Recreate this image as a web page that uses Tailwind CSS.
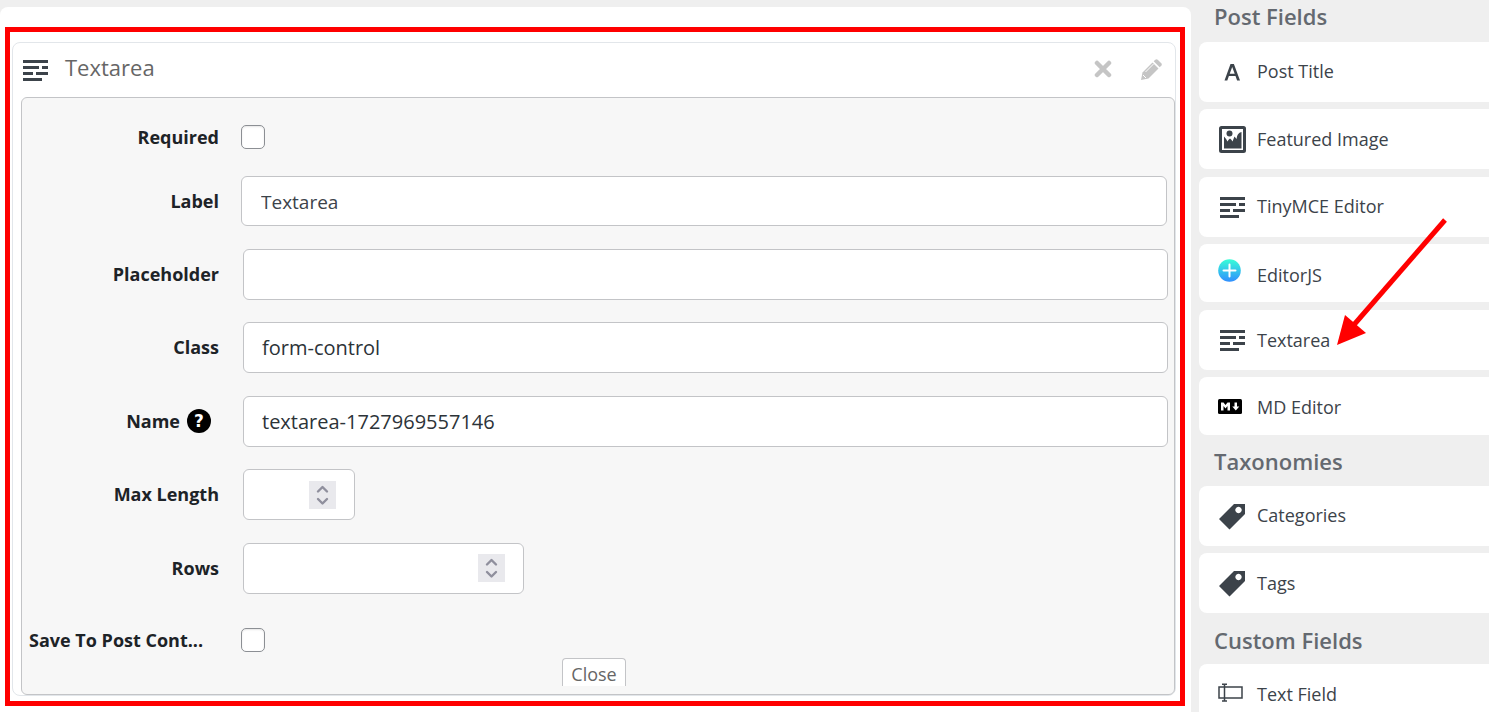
<!DOCTYPE html>
<html lang="en">
<head>
<meta charset="utf-8">
<title>Form builder</title>
<script src="https://cdn.jsdelivr.net/npm/@tailwindcss/browser@4"></script>
</head>
<body class="flex h-screen overflow-hidden bg-[#efefef] pt-[7px] font-['Segoe_UI','Open_Sans',sans-serif] text-[#3c434a]">
<svg class="hidden">
  <symbol id="lines" viewBox="0 0 26 22"><path fill="#3c434a" d="M0 0h25v3H0zM0 6h16v3H0zM19 6h6v3h-6zM0 12h10v3H0zM13 12h12v3H13zM0 18h19v3H0z"/></symbol>
  <symbol id="tag" viewBox="0 0 26 26"><path fill="#3c434a" fill-rule="evenodd" d="M15 0h11v10L10.500 25.500 0 15zM19.500 2.800a3.200 3.200 0 1 0 .01 0z"/></symbol>
  <symbol id="spin" viewBox="0 0 27 28"><path fill="none" stroke="#8f8f9d" stroke-width="2.400" stroke-linecap="round" stroke-linejoin="round" d="M9 10.500 13.500 6 18 10.500M9 18l4.500 4.500L18 18"/></symbol>
</svg>

<main class="min-w-0 flex-1 rounded-t-lg bg-white pt-5 pr-[6px] pl-[5px]">
  <section class="border-[5px] border-[#ff0000] pt-[10px] pr-[4px] pb-[5px] pl-[2px]">
    <div class="rounded-lg border border-[#e2e6ea] pl-2">
      <header class="flex h-[54px] items-center pr-[13px] pb-[2px] pl-[2px]">
        <svg class="mt-1 h-[22px] w-[26px]"><use href="#lines"/></svg>
        <h2 class="ml-4 flex-1 pb-1 text-[22px] leading-7 text-[#666]">Textarea</h2>
        <button type="button" aria-label="Remove" class="mr-[29px] cursor-pointer"><svg class="size-[18px]" viewBox="0 0 18 18"><path stroke="#c5c5c5" stroke-width="4.500" stroke-linecap="round" d="m3 3 12 12M15 3 3 15"/></svg></button>
        <button type="button" aria-label="Edit" class="cursor-pointer"><svg class="size-[21px]" viewBox="0 0 21 21"><path fill="#c5c5c5" d="m1.500 13.500 10-10 6 6-10 10L0 21z"/><path fill="#c5c5c5" d="m12.700 2.300 1.600-1.600q1.200-1 2.400 0l3.600 3.600q1 1.200 0 2.400l-1.600 1.600z"/><path stroke="#fff" d="m4.500 13 8-8M2 16l3 3"/></svg></button>
      </header>
      <form class="flex flex-col rounded-md border border-[#c3c4c7] bg-[#f7f7f7] pt-[27px] pr-[6px] pb-2 pl-[7px] text-[20px] leading-6">
        <div class="flex h-6 items-center">
          <label for="req" class="w-[190px] text-right text-[18px] font-bold text-[#1d2327]">Required</label>
          <input id="req" type="checkbox" class="ml-[22px] size-6 appearance-none rounded-[5px] border border-[#8c8f94] bg-white shadow-[inset_0_1px_2px_rgba(0,0,0,0.1)]">
        </div>
        <div class="mt-[27px] flex h-[50px] items-center pr-px">
          <label for="lab" class="w-[190px] text-right text-[18px] font-bold text-[#1d2327]">Label</label>
          <input id="lab" type="text" value="Textarea" class="ml-[22px] h-full min-w-0 flex-1 rounded-md border border-[#c3c4c7] bg-white px-[19px] pt-[2px] text-[19px]">
        </div>
        <div class="mt-[23px] flex h-[51px] items-center">
          <label for="ph" class="w-[190px] pb-[2px] text-right text-[18px] font-bold text-[#1d2327]">Placeholder</label>
          <input id="ph" type="text" class="ml-6 h-full min-w-0 flex-1 rounded-md border border-[#c3c4c7] bg-white px-[18px] pt-[2px]">
        </div>
        <div class="mt-[22px] flex h-[51px] items-center">
          <label for="cls" class="w-[190px] pb-[2px] text-right text-[18px] font-bold text-[#1d2327]">Class</label>
          <input id="cls" type="text" value="form-control" class="ml-6 h-full min-w-0 flex-1 rounded-md border border-[#c3c4c7] bg-white px-[18px] text-[#2c3338]">
        </div>
        <div class="mt-[23px] flex h-[51px] items-center">
          <div class="flex w-[190px] items-center justify-end pr-2 pb-[2px]">
            <label for="nm" class="text-[18px] font-bold text-[#1d2327]">Name</label>
            <button type="button" aria-label="Help" class="ml-[7px] size-6 cursor-pointer rounded-full bg-black font-['DejaVu_Sans'] text-[17px] leading-6 font-bold text-white">?</button>
          </div>
          <input id="nm" type="text" value="textarea-1727969557146" class="ml-6 h-full min-w-0 flex-1 rounded-md border border-[#c3c4c7] bg-white px-[18px] text-[#2c3338]">
        </div>
        <div class="mt-[22px] flex h-[51px] items-center">
          <label for="max" class="w-[190px] pb-[2px] text-right text-[18px] font-bold text-[#1d2327]">Max Length</label>
          <div class="relative ml-6 h-full w-28">
            <input id="max" type="number" class="h-full w-full rounded-md border border-[#c3c4c7] bg-white px-[18px] [appearance:textfield]">
            <svg class="pointer-events-none absolute top-3 right-[19px] h-7 w-[27px] bg-[#e9e9ed]"><use href="#spin"/></svg>
          </div>
        </div>
        <div class="mt-[23px] flex h-[51px] items-center">
          <label for="rows" class="w-[190px] pb-[2px] text-right text-[18px] font-bold text-[#1d2327]">Rows</label>
          <div class="relative ml-6 h-full w-[281px]">
            <input id="rows" type="number" class="h-full w-full rounded-md border border-[#c3c4c7] bg-white px-[18px] [appearance:textfield]">
            <svg class="pointer-events-none absolute top-[11px] right-[19px] h-7 w-[27px] bg-[#e9e9ed]"><use href="#spin"/></svg>
          </div>
        </div>
        <div class="mt-[34px] flex h-6 items-center">
          <label for="save" class="w-[190px] text-[18px] font-bold whitespace-nowrap text-[#1d2327]">Save To Post Cont...</label>
          <input id="save" type="checkbox" class="ml-[22px] size-6 appearance-none rounded-[5px] border border-[#8c8f94] bg-white shadow-[inset_0_1px_2px_rgba(0,0,0,0.1)]">
        </div>
        <button type="button" class="mt-[6px] mr-[9px] h-7 w-16 cursor-pointer self-center rounded-t border border-b-0 border-[#c3c4c7] bg-white pt-[2px] text-[18px] text-[#666]">Close</button>
      </form>
    </div>
  </section>
</main>

<aside class="-mt-[2px] w-[298px] shrink-0 pl-2 text-[18px] leading-6">
  <h3 class="flex h-[37px] items-start pl-[15px] text-[22px] leading-[22px] font-semibold text-[#646970]">Post Fields</h3>
  <ul>
    <li class="flex h-[60px] items-center rounded-l-lg bg-white pl-5">
      <svg class="mr-3 w-[26px] shrink-0" height="18" viewBox="0 0 26 18"><path fill="#3c434a" fill-rule="evenodd" d="M11.500 1h3.400L21 17.500h-2.900L16.500 13H9.900l-1.600 4.500H5.500zM13.200 4l-2.500 6.800h5z"/></svg>
      <a href="#post-title" class="pb-[2px]">Post Title</a></li>
    <li class="mt-[7px] flex h-[60px] items-center rounded-l-lg bg-white pl-5">
      <svg class="mr-[11px] w-[27px] shrink-0" height="27" viewBox="0 0 27 27"><rect x="1.500" y="1.500" width="24" height="24" rx="1" fill="none" stroke="#3c434a" stroke-width="3"/><circle cx="10.500" cy="7.500" r="3" fill="#3c434a"/><path fill="#3c434a" d="M5 10.500q2 2 3.500 5 1-2 2.500-3 1.500 1 2.500 3l2-5 2 2.500Q18 7 22.500 6v16.500H5z"/></svg>
      <a href="#featured-image">Featured Image</a></li>
    <li class="mt-2 flex h-[60px] items-center rounded-l-lg bg-white pl-[21px]">
      <svg class="mt-[2px] mr-[11px] h-[22px] w-[26px] shrink-0"><use href="#lines"/></svg>
      <a href="#tinymce" class="pb-[2px]">TinyMCE Editor</a></li>
    <li class="mt-[7px] flex h-[58px] items-center rounded-l-lg bg-white pl-[19px]">
      <svg class="mr-4 mb-[6px] w-[23px] shrink-0" height="23" viewBox="0 0 23 23"><defs><linearGradient id="ej" x1="0" y1="0" x2="0" y2="1"><stop stop-color="#39ffd7"/><stop offset="1" stop-color="#308eff"/></linearGradient></defs><circle cx="11.500" cy="11.500" r="11.300" fill="url(#ej)"/><path stroke="#fff" stroke-width="2" stroke-linecap="round" d="M11.500 5.500v12M5.500 11.500h12"/></svg>
      <a href="#editorjs" class="pt-1">EditorJS</a></li>
    <li class="relative mt-2 flex h-[60px] items-center rounded-l-lg bg-white pl-[21px]">
      <svg class="mt-[2px] mr-[11px] h-[22px] w-[26px] shrink-0"><use href="#lines"/></svg>
      <a href="#textarea">Textarea</a>
      <svg class="pointer-events-none absolute -top-24 left-[136px]" width="120" height="140" viewBox="0 0 120 140"><path stroke="#f00" stroke-width="5" d="M110 6 17 113"/><path fill="#f00" d="m2 131 8-30 21 18z"/></svg></li>
    <li class="mt-[7px] flex h-[58px] items-center rounded-l-lg bg-white pl-[19px]">
      <svg class="mr-[15px] w-6 shrink-0" height="15" viewBox="0 0 24 15"><rect width="24" height="15" rx="1.500" fill="#000"/><path fill="#fff" d="M3 11.500v-8h2.500l2 2.500 2-2.500H12v8H9.500V7l-2 2.500L5.500 7v4.500zM16.500 3.500h2.500v4h2.300l-3.500 4-3.500-4h2.200z"/></svg>
      <a href="#md" class="pt-[2px]">MD Editor</a></li>
  </ul>
  <h3 class="flex h-[51px] items-center pl-[15px] text-[22px] leading-7 font-semibold text-[#646970]">Taxonomies</h3>
  <ul>
    <li class="flex h-[60px] items-center rounded-l-lg bg-white pl-5">
      <svg class="mt-[2px] mr-3 size-[26px] shrink-0"><use href="#tag"/></svg>
      <a href="#categories" class="pb-[2px]">Categories</a></li>
    <li class="mt-[7px] flex h-[60px] items-center rounded-l-lg bg-white pl-5">
      <svg class="mt-[2px] mr-3 size-[26px] shrink-0"><use href="#tag"/></svg>
      <a href="#tags">Tags</a></li>
  </ul>
  <h3 class="flex h-[51px] items-center pt-[2px] pl-[15px] text-[22px] leading-7 font-semibold text-[#646970]">Custom Fields</h3>
  <ul>
    <li class="flex h-[60px] items-center rounded-l-lg bg-white pl-[19px]">
      <svg class="mr-[14px] mb-[3px] w-[25px] shrink-0" height="19" viewBox="0 0 25 19"><path fill="none" stroke="#3c434a" stroke-width="1.500" d="M1 4h23v11H1zM4 1.200h2.500V18H4M9 1.200H6.500V18H9"/></svg>
      <a href="#text-field">Text Field</a></li>
  </ul>
</aside>
</body>
</html>
